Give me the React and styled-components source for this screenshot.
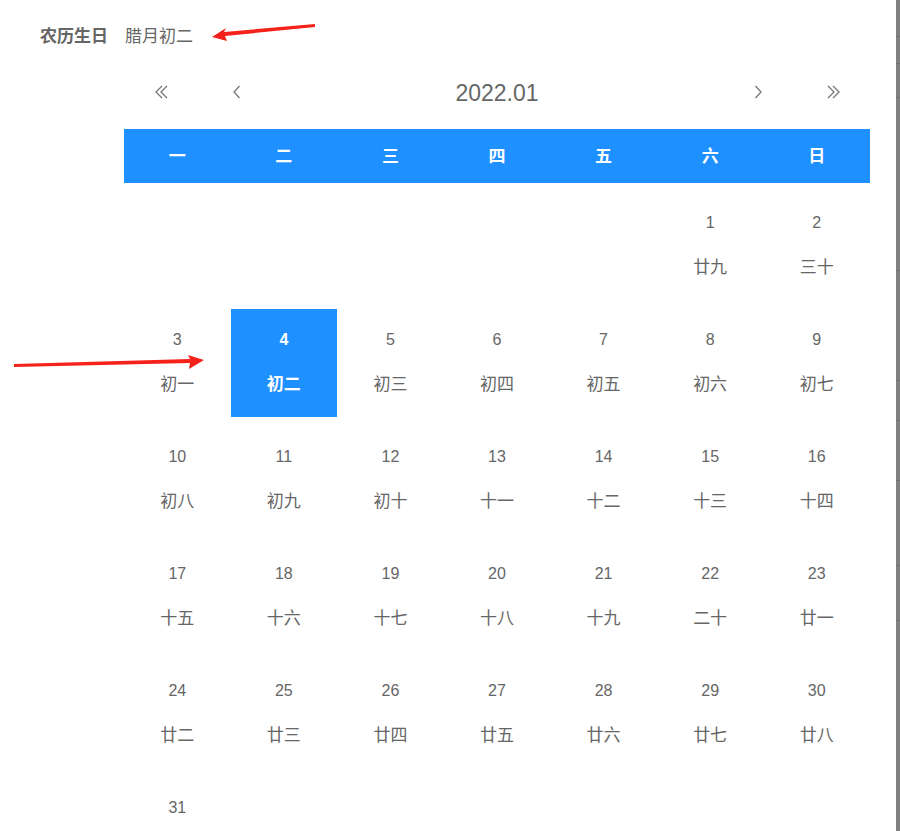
import styled, { createGlobalStyle } from "styled-components";

const GlobalStyle = createGlobalStyle`
  html, body {
    margin: 0;
    padding: 0;
    background: #ffffff;
  }
  body {
    font-family: "Liberation Sans", "Noto Sans CJK SC", sans-serif;
  }
`;

const weekdays = ["一", "二", "三", "四", "五", "六", "日"];

const lunar = [
  "廿九", "三十", "初一", "初二", "初三", "初四", "初五", "初六", "初七",
  "初八", "初九", "初十", "十一", "十二", "十三", "十四", "十五", "十六",
  "十七", "十八", "十九", "二十", "廿一", "廿二", "廿三", "廿四", "廿五",
  "廿六", "廿七", "廿八", "",
];

const OFFSET = 5; // Jan 1 2022 is a Saturday
const SELECTED = 4;

export default function App() {
  const cells = [];
  for (let i = 0; i < OFFSET; i++) cells.push(null);
  for (let d = 1; d <= 31; d++) cells.push(d);

  return (
    <>
      <GlobalStyle />
      <Page>
        <Panel>
          <TopRow>
            <Label>农历生日</Label>
            <Value>腊月初二</Value>
          </TopRow>

          <Calendar>
            <Nav>
              <NavButton>
                <svg width="16" height="14" viewBox="0 0 16 14" fill="none" stroke="#777" strokeWidth="1.3">
                  <path d="M8 1 L2 7 L8 13" />
                  <path d="M13 1 L7 7 L13 13" />
                </svg>
              </NavButton>
              <NavButton>
                <svg width="10" height="14" viewBox="0 0 10 14" fill="none" stroke="#777" strokeWidth="1.3">
                  <path d="M7.5 1 L2 7 L7.5 13" />
                </svg>
              </NavButton>
              <Title>2022.01</Title>
              <NavButton>
                <svg width="10" height="14" viewBox="0 0 10 14" fill="none" stroke="#777" strokeWidth="1.3">
                  <path d="M2.5 1 L8 7 L2.5 13" />
                </svg>
              </NavButton>
              <NavButton>
                <svg width="16" height="14" viewBox="0 0 16 14" fill="none" stroke="#777" strokeWidth="1.3">
                  <path d="M3 1 L9 7 L3 13" />
                  <path d="M8 1 L14 7 L8 13" />
                </svg>
              </NavButton>
            </Nav>

            <WeekHeader>
              {weekdays.map((w) => (
                <WeekDay key={w}>{w}</WeekDay>
              ))}
            </WeekHeader>

            <Days>
              {cells.map((d, i) =>
                d === null ? (
                  <Empty key={`e${i}`} />
                ) : (
                  <Day key={d} $selected={d === SELECTED}>
                    <DayNum>{d}</DayNum>
                    <Lunar>{lunar[d - 1]}</Lunar>
                  </Day>
                )
              )}
            </Days>
          </Calendar>

          <Annotations width="900" height="831" viewBox="0 0 900 831">
            <polygon points="315,24 224,32 226,28 212,37 227,41 225,36 315,27" fill="#f5221b" />
            <polygon points="14,367 190,363 189,369 204,360 188,355 190,359 14,364" fill="#f5221b" />
          </Annotations>
        </Panel>
        <Edge>
          {[36, 63, 97, 270, 380, 420, 480, 565, 620].map((y) => (
            <EdgeLine key={y} style={{ top: y }} />
          ))}
        </Edge>
      </Page>
    </>
  );
}

const Page = styled.div`
  display: flex;
  width: 900px;
  height: 831px;
  overflow: hidden;
`;

const Panel = styled.div`
  position: relative;
  width: 896px;
  height: 831px;
  background: #ffffff;
  color: #666666;
`;

const Edge = styled.div`
  position: relative;
  width: 4px;
  height: 831px;
  background: #808080;
`;

const EdgeLine = styled.div`
  position: absolute;
  left: 0;
  width: 4px;
  height: 1px;
  background: #727272;
`;

const TopRow = styled.div`
  display: flex;
  align-items: center;
  height: 20px;
  padding: 24px 0 11px 40px;
  font-family: "Noto Sans CJK SC", sans-serif;
  font-size: 17px;
  color: #666666;
`;

const Label = styled.span`
  font-weight: 700;
  width: 85px;
`;

const Value = styled.span`
  font-weight: 400;
`;

const Calendar = styled.div`
  margin-left: 124px;
  width: 746px;
`;

const Nav = styled.div`
  display: flex;
  align-items: center;
  height: 74px;
`;

const NavButton = styled.div`
  width: 75px;
  display: flex;
  justify-content: center;
  align-items: center;
  cursor: pointer;
`;

const Title = styled.div`
  flex: 1;
  text-align: center;
  font-size: 23px;
  color: #666666;
  transform: translateY(1px);
`;

const WeekHeader = styled.div`
  display: grid;
  grid-template-columns: repeat(7, 1fr);
  height: 54px;
  background: #1e90ff;
`;

const WeekDay = styled.div`
  display: flex;
  align-items: center;
  justify-content: center;
  padding-bottom: 3px;
  color: #ffffff;
  font-family: "Noto Sans CJK SC", sans-serif;
  font-weight: 700;
  font-size: 17px;
`;

const Days = styled.div`
  display: grid;
  grid-template-columns: repeat(7, 1fr);
  grid-auto-rows: 108px;
  row-gap: 9px;
  padding-top: 9px;
`;

const Empty = styled.div``;

const Day = styled.div`
  display: flex;
  flex-direction: column;
  align-items: center;
  justify-content: center;
  gap: 19px;
  padding-bottom: 3px;
  background: ${(p) => (p.$selected ? "#1e90ff" : "transparent")};
  color: ${(p) => (p.$selected ? "#ffffff" : "#666666")};
  font-weight: ${(p) => (p.$selected ? 700 : 400)};
`;

const DayNum = styled.div`
  font-size: 16px;
  line-height: 24px;
`;

const Lunar = styled.div`
  font-family: "Noto Sans CJK SC", sans-serif;
  font-size: 17px;
  line-height: 24px;
  min-height: 24px;
`;

const Annotations = styled.svg`
  position: absolute;
  top: 0;
  left: 0;
  pointer-events: none;
`;
